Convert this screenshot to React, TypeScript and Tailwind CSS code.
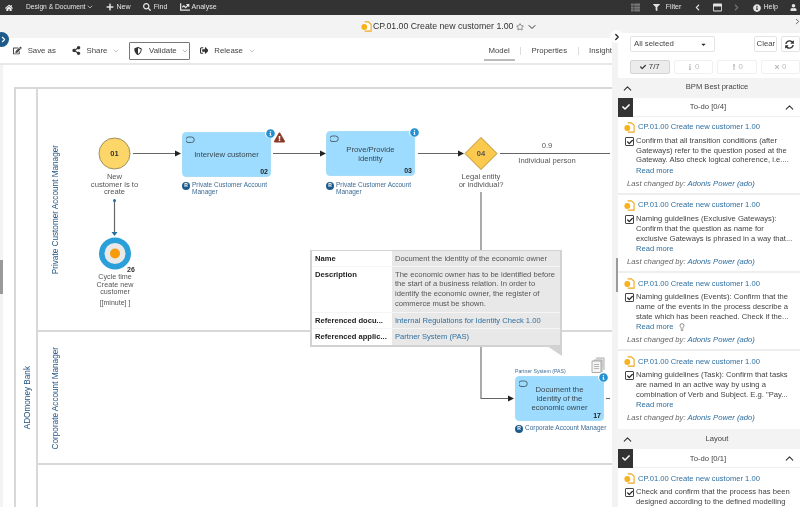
import React from "react";
import { ChevronDown, ChevronUp, ChevronRight, Star, Lightbulb } from "lucide-react";
import {
  FaHome, FaPlus, FaSearch, FaChartLine, FaFilter, FaChevronLeft, FaChevronRight, FaRegWindowMaximize,
  FaInfoCircle, FaUser, FaShareAlt, FaShieldAlt, FaSignOutAlt, FaSyncAlt, FaCheck, FaTimes, FaInfo,
  FaExclamation, FaCaretDown, FaEdit, FaExclamationTriangle, FaThList,
} from "react-icons/fa";

function ProcIcon({ size = 11 }: { size?: number }) {
  return (
    <svg width={size} height={size} viewBox="0 0 12 12" className="shrink-0">
      <path d="M4 1h4l3 2.5V11H4" fill="#fff" stroke="#f0a81e" strokeWidth="1.2" />
      <circle cx="3.6" cy="6.5" r="3.2" fill="#f7b21c" />
    </svg>
  );
}

function Item({ lines, bulb, last, partial }: { lines: string[]; bulb?: boolean; last?: boolean; partial?: boolean }) {
  return (
    <div className={`bg-white pl-[6px] pr-1 pt-[4px] shrink-0 ${partial ? "" : last ? "pb-[6px]" : "border-b-2 border-[#eeeeee] pb-[4px]"}`}>
      <div className="flex items-center gap-[3px] h-[12px]">
        <ProcIcon />
        <span className="text-[7.6px] text-[#2f6f9f] whitespace-nowrap">CP.01.00 Create new customer 1.00</span>
      </div>
      <div className="flex mt-[3px] ml-[1px]">
        <span className="w-[9px] h-[9px] mt-[1px] border border-[#444] rounded-[1px] flex items-center justify-center shrink-0">
          <FaCheck className="text-[6px] text-[#222]" />
        </span>
        <div className="ml-[2px] text-[7.65px] leading-[9.7px] text-[#444] whitespace-nowrap">
          {lines.map((l) => (
            <div key={l}>{l}</div>
          ))}
          {!partial && (
            <div className="flex items-center gap-1 text-[7.6px] text-[#2f6f9f] mt-[1px] leading-[10px]">
              Read more {bulb && <Lightbulb size={8} className="text-[#555]" />}
            </div>
          )}
        </div>
      </div>
      {!partial && (
        <div className="text-[7.7px] italic text-[#666] leading-[10px] mt-[3px] ml-[3px] whitespace-nowrap">
          Last changed by: <span className="text-[#2f6f9f]">Adonis Power (ado)</span>
        </div>
      )}
    </div>
  );
}

function SectionHead({ title }: { title: string }) {
  return (
    <div className="flex items-center h-[20px] bg-[#f3f3f3] pl-[3px] shrink-0">
      <ChevronUp size={13} className="text-[#333]" />
      <span className="flex-1 text-center text-[#444] text-[7.6px] pb-[2px]">{title}</span>
    </div>
  );
}

function TodoHead({ title }: { title: string }) {
  return (
    <div className="flex items-center h-[19px] bg-white border-b border-[#eeeeee] shrink-0">
      <span className="w-[15px] h-[19px] bg-[#333333] flex items-center justify-center">
        <FaCheck className="text-[8px] text-white" />
      </span>
      <span className="flex-1 text-center text-[7.7px] text-[#444]">{title}</span>
      <ChevronUp size={13} className="text-[#333] mr-[4px]" />
    </div>
  );
}

function Role({ x, y, w, lines }: { x: number; y: number; w: number; lines: string[] }) {
  return (
    <div className="absolute flex items-start gap-[2px]" style={{ left: x, top: y, width: w }}>
      <span className="mt-[1px] w-[8px] h-[8px] rounded-full bg-[#1c5a8c] text-white text-[5px] font-bold flex items-center justify-center shrink-0">
        R
      </span>
      <span className="text-[6.5px] leading-[7px] text-[#3d6c96] whitespace-nowrap">
        {lines.map((l) => (
          <div key={l}>{l}</div>
        ))}
      </span>
    </div>
  );
}

function Task({ x, y, num, lines }: { x: number; y: number; num: string; lines: string[] }) {
  return (
    <div
      className="absolute w-[89px] h-[45px] rounded-[4px] bg-[#9edcff] border border-[#a5dcf8] flex flex-col items-center justify-center text-[7.7px] leading-[9px] text-[#37474f] text-center"
      style={{ left: x, top: y }}
    >
      <svg width="9" height="8" viewBox="0 0 9 8" className="absolute left-[3px] top-[3px]">
        <path d="M2 1h3.5a2.5 2.5 0 0 1 0 5.5H3A2.4 2.4 0 0 1 2 1z" fill="none" stroke="#37474f" strokeWidth="0.8" />
      </svg>
      {lines.map((l) => (
        <div key={l}>{l}</div>
      ))}
      <span className="absolute right-[2px] bottom-0 text-[7px] font-bold text-[#222] leading-[9px]">{num}</span>
      <span className="absolute -right-[5px] -top-[5px] w-[10px] h-[10px] rounded-full bg-white flex items-center justify-center">
        <FaInfoCircle className="text-[9px] text-[#2390d0]" />
      </span>
    </div>
  );
}

function Label({ x, y, w, lines, cls = "text-[7.6px]" }: { x: number; y: number; w: number; lines: string[]; cls?: string }) {
  return (
    <div
      className={`absolute text-center leading-[7.7px] text-[#555] ${cls}`}
      style={{ left: x - w / 2, top: y, width: w }}
    >
      {lines.map((l) => (
        <div key={l}>{l}</div>
      ))}
    </div>
  );
}

function TipRow({ label, children, last, tight }: { label: string; children: React.ReactNode; last?: boolean; tight?: boolean }) {
  const pad = tight ? "pt-[3px] pb-[2px]" : "py-[3px]";
  return (
    <div className={`flex ${last ? "" : "border-b border-[#f5f5f5]"}`}>
      <div className={`w-[80px] shrink-0 bg-white px-[3px] ${pad} font-bold text-[#222] whitespace-nowrap overflow-hidden`}>{label}</div>
      <div className={`flex-1 bg-[#e8e8e8] px-[3px] ${pad} text-[#555]`}>{children}</div>
    </div>
  );
}

export default function App() {
  return (
    <div className="w-[800px] h-[507px] overflow-hidden flex flex-col bg-white font-['Liberation_Sans',Arial,sans-serif] relative blur-[0.4px]">
      {/* Top bar */}
      <div className="h-[15px] bg-[#333333] text-[#e4e4e4] text-[7.1px] flex items-center shrink-0 whitespace-nowrap">
        <FaHome className="text-[8px] ml-[5px] text-[#eee]" />
        <span className="ml-[13px] flex items-center gap-[1px] text-[6.7px]">
          Design &amp; Document <ChevronDown size={8} />
        </span>
        <span className="ml-[12px] flex items-center gap-[2px]"><FaPlus className="text-[8px]" /> New</span>
        <span className="ml-[12px] flex items-center gap-[3px]"><FaSearch className="text-[8px]" /> Find</span>
        <span className="ml-[12px] flex items-center gap-[2px]"><FaChartLine className="text-[10px]" /> Analyse</span>
        <div className="flex-1" />
        <FaThList className="text-[9px] text-[#777]" />
        <FaFilter className="text-[7px] ml-[13px]" />
        <span className="ml-[6px]">Filter</span>
        <FaChevronLeft className="text-[7px] ml-[13px]" />
        <FaRegWindowMaximize className="text-[9px] ml-[12px]" />
        <FaChevronRight className="text-[7px] ml-[11px] text-[#777]" />
        <FaInfoCircle className="text-[8px] ml-[13px]" />
        <span className="ml-[2px]">Help</span>
        <FaUser className="text-[7px] ml-[12px] mr-[3px]" />
      </div>

      <div className="flex-1 flex min-h-0">
        {/* Left column */}
        <div className="w-[612px] flex flex-col shrink-0">
          <div className="h-[23px] bg-[#f3f3f3] flex items-center pl-[361px] shrink-0">
            <span className="flex items-center gap-[1px] whitespace-nowrap text-[#333] text-[8.75px]">
              <ProcIcon size={11} />
              CP.01.00 Create new customer 1.00
              <Star size={8} className="ml-[2px] text-[#555]" />
              <ChevronDown size={12} className="ml-[1px] text-[#333]" />
            </span>
          </div>

          <div className="h-[27px] bg-white border-b-2 border-[#e8e8e8] flex items-center text-[7.8px] text-[#444] shrink-0 whitespace-nowrap">
            <FaEdit className="text-[9px] ml-[13px] text-[#444]" />
            <span className="ml-[6px]">Save as</span>
            <FaShareAlt className="text-[9px] ml-[16px] text-[#333]" />
            <span className="ml-[6px]">Share</span>
            <ChevronDown size={8} className="ml-[5px] text-[#999]" />
            <div className="ml-[9px] w-[62px] h-[18px] border border-[#777] rounded-[1px] flex items-center">
              <FaShieldAlt className="text-[8px] ml-[4px] text-[#333]" />
              <span className="ml-[7px]">Validate</span>
              <ChevronDown size={8} className="ml-[4px] text-[#999]" />
            </div>
            <FaSignOutAlt className="text-[9px] ml-[10px] text-[#333]" />
            <span className="ml-[6px]">Release</span>
            <ChevronDown size={8} className="ml-[5px] text-[#999]" />
            <div className="ml-[228px] w-[32px] h-[23px] self-start border-b-2 border-[#bbbbbb] flex items-center justify-center pt-[5px]">Model</div>
            <div className="w-px h-[8px] bg-[#ddd] ml-[5px]" />
            <span className="ml-[11px]">Properties</span>
            <div className="w-px h-[8px] bg-[#ddd] ml-[11px]" />
            <span className="ml-[10px]">Insight</span>
          </div>

          {/* Canvas */}
          <div className="flex-1 relative overflow-hidden bg-white border-l-[3px] border-[#f3f3f3]">
            <div className="absolute inset-0 pl-[11px] pt-[22px] flex">
              <div className="w-[24px] border-l-2 border-t-2 border-r-2 border-[#d8d8d8] flex items-start pl-[6px] pt-[277px] shrink-0">
                <span className="[writing-mode:vertical-rl] rotate-180 text-[8.2px] font-medium text-[#1f5482] whitespace-nowrap">ADOmoney Bank</span>
              </div>
              <div className="flex-1 flex flex-col border-t-2 border-[#d8d8d8]">
                <div className="h-[243px] border-b-2 border-[#d8d8d8] flex items-start pl-[12px] pt-[56px] shrink-0">
                  <span className="[writing-mode:vertical-rl] rotate-180 text-[8.2px] text-[#1f5482] font-medium whitespace-nowrap">Private Customer Account Manager</span>
                </div>
                <div className="h-[133px] border-b-2 border-[#d8d8d8] flex items-start pl-[12px] pt-[15px] shrink-0">
                  <span className="[writing-mode:vertical-rl] rotate-180 text-[8.2px] text-[#1f5482] font-medium whitespace-nowrap">Corporate Account Manager</span>
                </div>
              </div>
            </div>

            {/* diagram layer: offset x-3, y-65 */}
            <div className="absolute left-[-3px] top-[-65px] w-[615px] h-[507px]">
              <svg className="absolute inset-0" width="615" height="507">
                <defs>
                  <marker id="a" markerWidth="6" markerHeight="6" refX="5" refY="3" orient="auto">
                    <path d="M0 0L6 3L0 6z" fill="#222" />
                  </marker>
                </defs>
                <g stroke="#666" strokeWidth="1.1" fill="none">
                  <path d="M133 153.500H180" markerEnd="url(#a)" />
                  <path d="M273 153.500H325" markerEnd="url(#a)" />
                  <path d="M418 153.500H463" markerEnd="url(#a)" />
                  <path d="M500 153.500H610" />
                  <path d="M481 192V398.500H513" markerEnd="url(#a)" />
                  <path d="M114.500 200V233" strokeWidth="1.200" />
                  <path d="M606 398.500H610" />
                </g>
                <circle cx="114.500" cy="200.500" r="1.500" fill="#2a6da0" />
                <path d="M111.500 232h6l-3 4z" fill="#2a6da0" />
                <circle cx="114.500" cy="153.500" r="15.500" fill="#fcd668" stroke="#a08f62" strokeWidth="1" />
                <path d="M481 137.500L497 153.500L481 169.500L465 153.500z" fill="#fbc94e" stroke="#b8902e" strokeWidth="1" />
                <circle cx="115" cy="253.500" r="16" fill="#2b9fd9" />
                <circle cx="115" cy="253.500" r="10.500" fill="#e9e9e9" />
                <circle cx="115" cy="253.500" r="5" fill="#f59b0c" />
                <path d="M594 360h8v12h-8z M596 358h8v12" fill="#eee" stroke="#999" strokeWidth="0.8" />
                <path d="M592 361h9v11.500h-9z" fill="#f4f4f4" stroke="#999" strokeWidth="0.8" />
                <path d="M594 364.500h5M594 366.500h5M594 368.500h5" stroke="#999" strokeWidth="0.7" />
              </svg>

              <span className="absolute left-[107px] top-[149px] w-[15px] text-center text-[7.5px] font-bold text-[#333] leading-[9px]">01</span>
              <span className="absolute left-[473px] top-[149px] w-[16px] text-center text-[7.5px] font-bold text-[#555] leading-[9px]">04</span>
              <span className="absolute left-[127px] top-[265px] text-[7px] font-bold text-[#333] leading-[9px]">26</span>

              <Label x={114.500} y={173} w={60} lines={["New", "customer is to", "create"]} />
              <Label x={115} y={273} w={60} lines={["Cycle time", "Create new", "customer"]} cls="text-[7.2px]" />
              <Label x={115} y={299} w={60} lines={["[[minute]   ]"]} cls="text-[7px]" />
              <Label x={481} y={173} w={60} lines={["Legal entity", "or individual?"]} />
              <Label x={547} y={142} w={30} lines={["0.9"]} />
              <Label x={547} y={157} w={70} lines={["Individual person"]} />

              <Task x={182} y={132} num="02" lines={["Interview customer"]} />
              <FaExclamationTriangle className="absolute left-[274px] top-[132px] text-[11px] text-[#8c3b2a]" />
              <Task x={326} y={131} num="03" lines={["Prove/Provide", "identity"]} />
              <Task x={515} y={376} num="17" lines={["Document the", "identity of the", "economic owner"]} />
              <span className="absolute left-[515px] top-[368px] text-[5.200px] leading-[6px] text-[#3d6c96] whitespace-nowrap">Partner System (PAS)</span>

              <Role x={182} y={181} w={88} lines={["Private Customer Account", "Manager"]} />
              <Role x={326} y={181} w={88} lines={["Private Customer Account", "Manager"]} />
              <Role x={515} y={424} w={100} lines={["Corporate Account Manager"]} />

              {/* Tooltip */}
              <div className="absolute left-[310px] top-[250px] w-[252px] border-2 border-t border-[#d2d2d2] text-[7.600px] leading-[9.700px] bg-white">
                <TipRow label="Name" tight>Document the identity of the economic owner</TipRow>
                <TipRow label="Description">
                  The economic owner has to be identified before the start of a business relation. In order to identify the economic owner, the register of commerce must be shown.
                </TipRow>
                <TipRow label="Referenced docu..."><span className="text-[#2f6f9f]">Internal Regulations for Identity Check 1.00</span></TipRow>
                <TipRow label="Referenced applic..." last><span className="text-[#2f6f9f]">Partner System (PAS)</span></TipRow>
                <span className="absolute -bottom-[11px] right-[-2px] w-0 h-0 border-l-[15px] border-l-transparent border-t-[10px] border-t-[#d2d2d2]" />
              </div>
            </div>
          </div>
        </div>

        {/* Splitter */}
        <div className="w-[6px] bg-[#f3f3f3] shrink-0 flex justify-end pt-[243px]">
          <div className="w-[2px] h-[34px] bg-[#9a9a9a]" />
        </div>

        {/* Right panel */}
        <div className="w-[182px] shrink-0 flex flex-col min-h-0">
          <div className="h-[18px] bg-[#f3f3f3] flex justify-end items-start pt-[2px] shrink-0">
            <ChevronRight size={9} className="text-[#333] mr-[-2px]" />
          </div>
          <div className="flex items-center h-[22px] pl-[12px] shrink-0 bg-white">
            <div className="w-[88px] h-[16px] border border-[#e4e4e4] rounded-[2px] flex items-center px-[3px] text-[7.800px] text-[#444]">
              <span className="flex-1">All selected</span>
              <FaCaretDown className="text-[7px] text-[#222] mr-[4px]" />
            </div>
            <div className="ml-[39px] w-[24px] h-[16px] border border-[#e4e4e4] rounded-[2px] flex items-center justify-center text-[7.800px] text-[#444]">Clear</div>
            <div className="ml-[4px] w-[19px] h-[16px] border border-[#e4e4e4] rounded-[2px] flex items-center pl-[3px]">
              <FaSyncAlt className="text-[9px] text-[#333]" />
            </div>
          </div>
          <div className="flex items-center gap-[4px] h-[23px] pl-[12px] shrink-0 bg-white text-[7.800px]">
            <div className="w-[40px] h-[14px] bg-[#ececec] border border-[#d4d4d4] rounded-[2px] flex items-center justify-center gap-[3px] text-[#333]">
              <FaCheck className="text-[6px]" /> 7/7
            </div>
            <div className="w-[40px] h-[14px] border border-[#f0f0f0] rounded-[2px] flex items-center justify-center gap-[2px] text-[#bbb]"><FaInfo className="text-[6px]" /> 0</div>
            <div className="w-[40px] h-[14px] border border-[#f0f0f0] rounded-[2px] flex items-center justify-center gap-[2px] text-[#bbb]"><FaExclamation className="text-[6px]" /> 0</div>
            <div className="w-[40px] h-[14px] border border-[#f0f0f0] rounded-[2px] flex items-center justify-center gap-[2px] text-[#bbb]"><FaTimes className="text-[6px]" /> 0</div>
          </div>
          <SectionHead title="BPM Best practice" />
          <TodoHead title="To-do [0/4]" />
          <Item lines={["Confirm that all transition conditions (after", "Gateways) refer to the question posed at the", "Gateway. Also check logical coherence, i.e...."]} />
          <Item lines={["Naming guidelines (Exclusive Gateways):", "Confirm that the question as name for", "exclusive Gateways is phrased in a way that..."]} />
          <Item bulb lines={["Naming guidelines (Events): Confirm that the", "name of the events in the process describe a", "state which has been reached. Check if the..."]} />
          <Item last lines={["Naming guidelines (Task): Confirm that tasks", "are named in an active way by using a", "combination of Verb and Subject. E.g. \"Pay..."]} />
          <SectionHead title="Layout" />
          <TodoHead title="To-do [0/1]" />
          <Item partial lines={["Check and confirm that the process has been", "designed according to the defined modelling"]} />
        </div>
      </div>

      {/* Overlay collapse buttons */}
      <span className="absolute left-[-6px] top-[32px] w-[15px] h-[15px] rounded-full bg-[#1c5a8c] flex items-center justify-end pr-[1px]">
        <ChevronRight size={9} className="text-white" strokeWidth={3} />
      </span>
      <span className="absolute left-[610px] top-[30px] w-[13px] h-[13px] rounded-full bg-white flex items-center justify-center">
        <ChevronRight size={10} className="text-[#222]" strokeWidth={3} />
      </span>
      <span className="absolute left-0 top-[260px] w-[3px] h-[34px] bg-[#9a9a9a]" />
    </div>
  );
}
